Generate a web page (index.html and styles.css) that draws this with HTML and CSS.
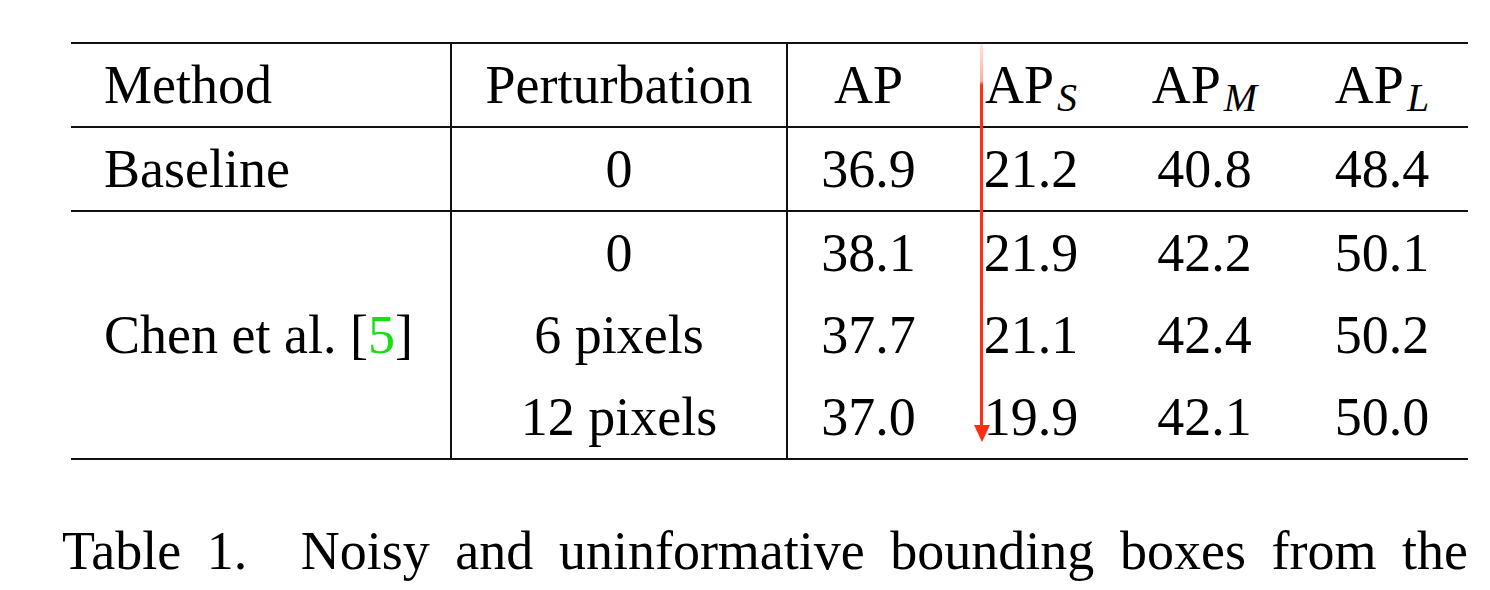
FILE: index.html
```html
<!DOCTYPE html>
<html lang="en">
<head>
    <meta charset="UTF-8">
    <title>Table 1</title>
    <link rel="stylesheet" href="styles.css">
</head>
<body>
    <div class="page">
        <div class="table-wrap">
            <table class="results">
                <colgroup>
                    <col class="c-method">
                    <col class="c-pert">
                    <col class="c-ap">
                    <col class="c-aps">
                    <col class="c-apm">
                    <col class="c-apl">
                </colgroup>
                <thead>
                    <tr>
                        <th class="left sep">Method</th>
                        <th class="sep">Perturbation</th>
                        <th>AP</th>
                        <th>AP<sub>S</sub></th>
                        <th>AP<sub>M</sub></th>
                        <th>AP<sub>L</sub></th>
                    </tr>
                </thead>
                <tbody class="group">
                    <tr>
                        <td class="left sep">Baseline</td>
                        <td class="sep">0</td>
                        <td>36.9</td>
                        <td>21.2</td>
                        <td>40.8</td>
                        <td>48.4</td>
                    </tr>
                </tbody>
                <tbody class="group">
                    <tr>
                        <td class="left sep" rowspan="3">Chen et al. [<span class="cite">5</span>]</td>
                        <td class="sep">0</td>
                        <td>38.1</td>
                        <td>21.9</td>
                        <td>42.2</td>
                        <td>50.1</td>
                    </tr>
                    <tr>
                        <td class="sep">6 pixels</td>
                        <td>37.7</td>
                        <td>21.1</td>
                        <td>42.4</td>
                        <td>50.2</td>
                    </tr>
                    <tr>
                        <td class="sep">12 pixels</td>
                        <td>37.0</td>
                        <td>19.9</td>
                        <td>42.1</td>
                        <td>50.0</td>
                    </tr>
                </tbody>
            </table>

            <!-- annotation arrow drawn over the AP_S column -->
            <div class="arrow">
                <div class="arrow-shaft"></div>
                <div class="arrow-head"></div>
            </div>
        </div>

        <p class="caption"><span class="label">Table 1.</span> Noisy and uninformative bounding boxes from the</p>
    </div>
</body>
</html>
```

FILE: styles.css
```css
body {
    margin: 0;
    background: #fff;
    color: #000;
    font-family: "Liberation Serif", "Times New Roman", serif;
}

.page {
    width: 1490px;
    padding-top: 42px;
}

.table-wrap {
    position: relative;
    width: 1397px;
    margin-left: 71px;
}

.results {
    width: 1397px;
    border-collapse: collapse;
    table-layout: fixed;
    font-size: 54px;
    border-top: 2px solid #111;
    border-bottom: 2px solid #111;
}

.c-method { width: 380px; }
.c-pert { width: 336px; }
.c-ap { width: 162px; }
.c-aps { width: 164px; }
.c-apm { width: 183px; }
.c-apl { width: 172px; }

.results th,
.results td {
    font-weight: normal;
    text-align: center;
    padding: 0;
    height: 82px;
    line-height: 82px;
    white-space: nowrap;
}

.results tbody.group tr:first-child td { border-top: 2px solid #111; }

.results .left {
    text-align: left;
    padding-left: 33px;
}

.results .sep { border-right: 2px solid #111; }

.results td[rowspan] { vertical-align: middle; }

sub {
    font-style: italic;
    font-size: 0.74em;
    color: #000;
    vertical-align: -0.2em;
    line-height: 0;
    margin-left: 3px;
}

.cite { color: #14e014; }

.arrow {
    position: absolute;
    left: 903px;
    top: 1px;
    width: 15px;
    height: 399px;
    display: flex;
    flex-direction: column;
    align-items: center;
}

.arrow-shaft {
    width: 3px;
    flex: 1;
    background: linear-gradient(to bottom, rgba(255, 45, 18, 0.12) 0%, rgba(255, 45, 18, 0.4) 10%, #ff2d12 11%, #ff2d12 100%);
}

.arrow-head {
    width: 0;
    height: 0;
    border-left: 8px solid transparent;
    border-right: 8px solid transparent;
    border-top: 17px solid #ff2d12;
}

.caption {
    margin: 60px 22px 0 62px;
    font-size: 54px;
    text-align: justify;
    text-align-last: justify;
    white-space: nowrap;
}

.caption .label { margin-right: 28px; }
```
